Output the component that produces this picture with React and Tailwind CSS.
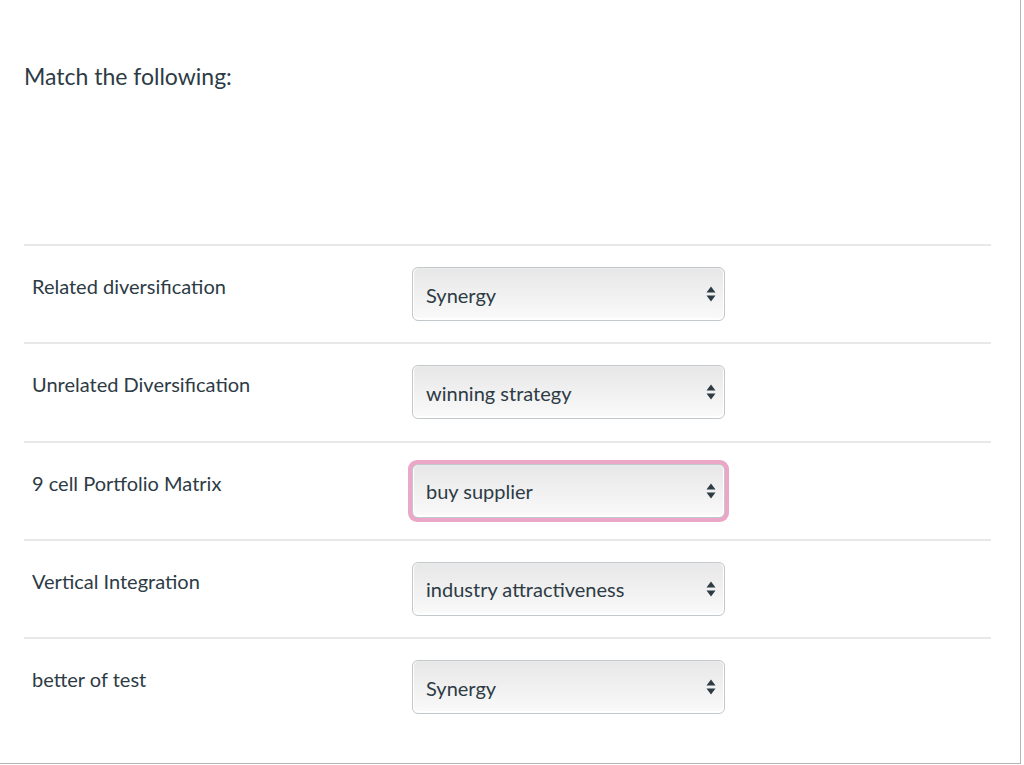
const rows = [
  { label: 'Related diversification', value: 'Synergy' },
  { label: 'Unrelated Diversification', value: 'winning strategy' },
  { label: '9 cell Portfolio Matrix', value: 'buy supplier', focused: true },
  { label: 'Vertical Integration', value: 'industry attractiveness' },
  { label: 'better of test', value: 'Synergy' },
];

function Arrows() {
  return (
    <svg width="10" height="16" viewBox="0 0 10 16" className="text-[#2d3b45]">
      <path d="M5 0.5 L9.5 6.5 L0.5 6.5 Z" fill="currentColor" />
      <path d="M0.5 9.5 L9.5 9.5 L5 15.5 Z" fill="currentColor" />
    </svg>
  );
}

function FakeSelect({ value, focused }) {
  return (
    <div
      className={
        'rounded-[9px] ' +
        (focused ? 'p-[4px] -m-[4px] bg-[#eba7c7]' : '')
      }
    >
      <div className="w-[313px] h-[54px] rounded-[6px] border border-[#c3c8cc] bg-gradient-to-b from-[#e7e7e7] to-[#fafafa] shadow-[inset_0_-2px_1px_#ffffff,inset_1px_0_1px_#ffffff,inset_-1px_0_1px_#ffffff] flex items-center justify-between pl-[13px] pr-[8px]">
        <span className="text-[20px] text-[#2d3b45] pt-[1px]">{value}</span>
        <Arrows />
      </div>
    </div>
  );
}

export default function App() {
  return (
    <div className="w-[1021px] h-[764px] bg-white border-r border-b border-[#b5b5b5] font-['Lato','Liberation_Sans',sans-serif] text-[#2d3b45]">
      <h1 className="pl-6 pt-[61px] text-[23px] leading-[30px] font-normal">Match the following:</h1>

      <div className="mx-6 mt-[153px] w-[967px]">
        {rows.map(row => (
          <div key={row.label} className="h-[98.25px] border-t-2 border-[#e8e8e8] flex items-start">
            <div className="w-[388px] pl-2 pt-[27px] text-[20px] leading-[26px]">{row.label}</div>
            <div className="pt-[21px]">
              <FakeSelect value={row.value} focused={row.focused} />
            </div>
          </div>
        ))}
      </div>
    </div>
  );
}
